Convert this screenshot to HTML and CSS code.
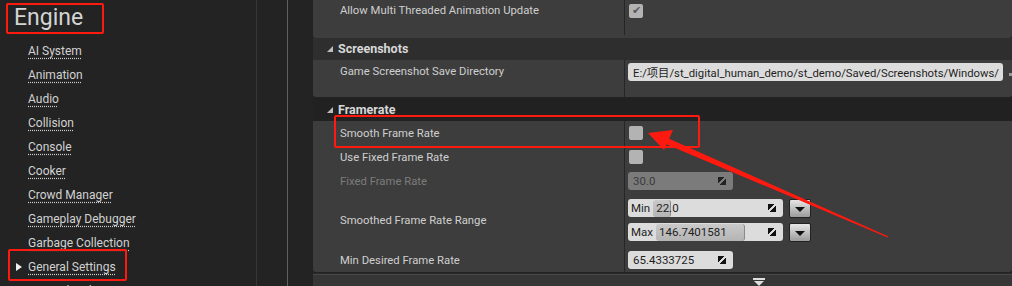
FILE: index.html
```html
<!DOCTYPE html>
<html lang="zh">
<head>
    <meta charset="UTF-8">
    <title>Project Settings - Engine</title>
    <link rel="stylesheet" href="styles.css">
</head>

<body>
    <div class="layout">
        <div class="sidebar">
            <div class="category">Engine</div>
            <ul class="nav">
                <li><a>AI System</a></li>
                <li><a>Animation</a></li>
                <li><a>Audio</a></li>
                <li><a>Collision</a></li>
                <li><a>Console</a></li>
                <li><a>Cooker</a></li>
                <li><a>Crowd Manager</a></li>
                <li><a>Gameplay Debugger</a></li>
                <li><a>Garbage Collection</a></li>
                <li class="active"><a>General Settings</a></li>
                <li><a>Hierarchical LOD</a></li>
            </ul>
        </div>
        <div class="gutter"></div>

        <div class="panel">
            <div class="section">
                <div class="row tall first">
                    <div class="label">Allow Multi Threaded Animation Update</div>
                    <div class="value"><span class="check checked">&#10004;</span></div>
                </div>
            </div>

            <div class="header">
                <span class="arrow"></span>Screenshots
            </div>
            <div class="section">
                <div class="row tall dir">
                    <div class="label">Game Screenshot Save Directory</div>
                    <div class="value">
                        <span class="field path">E:/项目/st_digital_human_demo/st_demo/Saved/Screenshots/Windows/</span>
                        <span class="reset"></span>
                    </div>
                </div>
            </div>

            <div class="header dark">
                <span class="arrow"></span>Framerate
            </div>
            <div class="section">
                <div class="row">
                    <div class="label">Smooth Frame Rate</div>
                    <div class="value"><span class="check"></span></div>
                </div>
                <div class="row">
                    <div class="label">Use Fixed Frame Rate</div>
                    <div class="value"><span class="check"></span></div>
                </div>
                <div class="row">
                    <div class="label disabled">Fixed Frame Rate</div>
                    <div class="value">
                        <span class="field num off">30.0<span class="grip"></span></span>
                    </div>
                </div>
                <div class="row range">
                    <div class="label">Smoothed Frame Rate Range</div>
                    <div class="value stack">
                        <div class="line">
                            <span class="field wide"><span class="tag">Min</span><span class="spin" style="width: 18px">22.0</span><span class="grip"></span></span>
                            <span class="combo"></span>
                        </div>
                        <div class="line">
                            <span class="field wide"><span class="tag">Max</span><span class="spin" style="width: 89px">146.7401581</span><span class="grip"></span></span>
                            <span class="combo"></span>
                        </div>
                    </div>
                </div>
                <div class="row">
                    <div class="label">Min Desired Frame Rate</div>
                    <div class="value">
                        <span class="field num">65.4333725<span class="grip"></span></span>
                    </div>
                </div>
            </div>
            <div class="footer"><span class="more"></span></div>
        </div>
    </div>

    <!-- annotations drawn on top of the screenshot -->
    <div class="mark mark-engine"></div>
    <div class="mark mark-general"></div>
    <div class="mark mark-smooth"></div>
    <svg class="pointer" width="1012" height="286" viewBox="0 0 1012 286">
        <polygon points="663.3,142.9 665.7,137.3 888.4,236.4 887.6,237.6" fill="#ff1a10"/>
        <polygon points="648,133 673,130 664,150" fill="#ff1a10"/>
    </svg>
</body>
</html>
```

FILE: styles.css
```css
* {
    box-sizing: border-box;
}

body {
    margin: 0;
    background-color: #232323;
    font-family: Roboto, 'Noto Sans CJK SC', sans-serif;
    color: #cfcfcf;
    overflow: hidden;
    height: 286px;
}

.layout {
    display: flex;
    height: 286px;
    overflow: hidden;
}

/* left category list */
.sidebar {
    width: 259px;
    border-right: 1px solid #363636;
    padding: 3px 0 0 14px;
    overflow: hidden;
}

.category {
    font-size: 23px;
    color: #d4d4d4;
    height: 30px;
    line-height: 30px;
    margin-bottom: 6px;
}

.nav {
    list-style: none;
    margin: 0;
    padding: 0 0 0 14px;
}

.nav li {
    height: 24px;
    line-height: 24px;
    font-size: 12px;
    position: relative;
}

.nav a {
    color: #d2d2d2;
    text-decoration: underline dotted #d2d2d2;
    text-underline-offset: 3px;
}

.nav li.active::before {
    content: "";
    position: absolute;
    left: -12px;
    top: 8px;
    border-left: 6px solid #f0f0f0;
    border-top: 4px solid transparent;
    border-bottom: 4px solid transparent;
}

.gutter {
    width: 31px;
    border-right: 1px solid #606060;
}

/* details panel */
.panel {
    flex: 1;
    margin-left: 25px;
    display: flex;
    flex-direction: column;
}

.section {
    background-color: #3d3d3d;
    border-radius: 0 0 3px 3px;
}

.row {
    display: flex;
    height: 24px;
    font-size: 11.3px;
}

.row.first {
    height: 35px;
    margin-bottom: 3px;
}

.row.dir {
    height: 37px;
}

.row.range {
    height: 55px;
}

.label {
    width: 311px;
    padding-left: 27px;
    display: flex;
    align-items: center;
    color: #cfcfcf;
}

.row.tall .label {
    align-items: flex-start;
    padding-top: 5px;
}

.row.first .label {
    padding-top: 4px;
}

.label.disabled {
    color: #7c7c7c;
}

.value {
    flex: 1;
    border-left: 1px solid #262626;
    padding-left: 3px;
    display: flex;
    align-items: center;
}

.row.tall .value {
    align-items: flex-start;
    padding-top: 3px;
}

.row.first .value {
    padding-top: 4px;
}

.value.stack {
    flex-direction: column;
    align-items: flex-start;
    justify-content: center;
    gap: 5px;
}

.line {
    display: flex;
    gap: 6px;
}

.header {
    height: 22px;
    background-color: #2e2e2e;
    display: flex;
    align-items: center;
    padding-left: 14px;
    font-size: 12.5px;
    font-weight: bold;
    color: #d8d8d8;
}

.header.dark {
    height: 24px;
    margin-top: 1px;
    background-color: #212121;
}

.arrow {
    width: 0;
    height: 0;
    border-right: 6px solid #bdbdbd;
    border-top: 6px solid transparent;
    margin-right: 5px;
    margin-top: 1px;
}

/* widgets */
.check {
    width: 14px;
    height: 14px;
    margin-left: 1px;
    border-radius: 2px;
    background-color: #b3b3b3;
    color: #5a5a5a;
    font-size: 11px;
    line-height: 14px;
    text-align: center;
}

.field {
    height: 18px;
    border-radius: 3px;
    background-color: #dcdcdc;
    color: #1e1e1e;
    font-size: 11.5px;
    display: flex;
    align-items: center;
    padding: 0 5px;
    position: relative;
    white-space: nowrap;
}

.field.path {
    width: 375px;
    overflow: hidden;
    font-size: 11.3px;
}

.field.num {
    width: 105px;
}

.field.num.off {
    background-color: #7b7b7b;
    color: #3b3b3b;
}

.field.wide {
    width: 155px;
    padding-left: 3px;
}

.tag {
    margin-right: 3px;
}

.spin {
    height: 17px;
    line-height: 17px;
    border-radius: 3px;
    background: linear-gradient(to bottom, #c9c9c9, #b4b4b4);
    border-right: 1px solid #8a8a8a;
    padding-left: 3px;
    white-space: nowrap;
}

.grip {
    position: absolute;
    right: 7px;
    top: 5px;
    width: 8px;
    height: 8px;
    background: linear-gradient(135deg, #111 0 42%, transparent 42% 58%, #111 58%);
}

.off .grip {
    background: linear-gradient(135deg, #222 0 42%, transparent 42% 58%, #222 58%);
}

.combo {
    width: 22px;
    height: 19px;
    border: 1px solid #222;
    border-radius: 2px;
    background: linear-gradient(to bottom, #e6e6e6, #9b9b9b);
    position: relative;
}

.combo::after {
    content: "";
    position: absolute;
    left: 5px;
    top: 7px;
    border-top: 5px solid #111;
    border-left: 5px solid transparent;
    border-right: 5px solid transparent;
}

.reset {
    margin-left: 6px;
    margin-top: 10px;
    width: 3px;
    height: 3px;
    background-color: #9a9a9a;
}

.footer {
    flex: 1;
    margin-top: 1px;
    border-top: 1px solid #2a2a2a;
    background-color: #363636;
    box-shadow: inset 0 1px 0 #474747;
    display: flex;
    padding: 4px 0 0 440px;
}

.more {
    width: 12px;
    height: 8px;
    border-top: 2px solid #dedede;
    position: relative;
}

.more::after {
    content: "";
    position: absolute;
    left: 1px;
    top: 1px;
    border-top: 5px solid #dedede;
    border-left: 5px solid transparent;
    border-right: 5px solid transparent;
}

/* red annotations */
.mark {
    position: absolute;
    border: 2px solid #ff1a10;
    border-radius: 2px;
}

.mark-engine {
    left: 6px;
    top: 3px;
    width: 98px;
    height: 31px;
}

.mark-general {
    left: 8px;
    top: 249px;
    width: 119px;
    height: 32px;
}

.mark-smooth {
    left: 334px;
    top: 115px;
    width: 366px;
    height: 33px;
}

.pointer {
    position: absolute;
    left: 0;
    top: 0;
}
```
